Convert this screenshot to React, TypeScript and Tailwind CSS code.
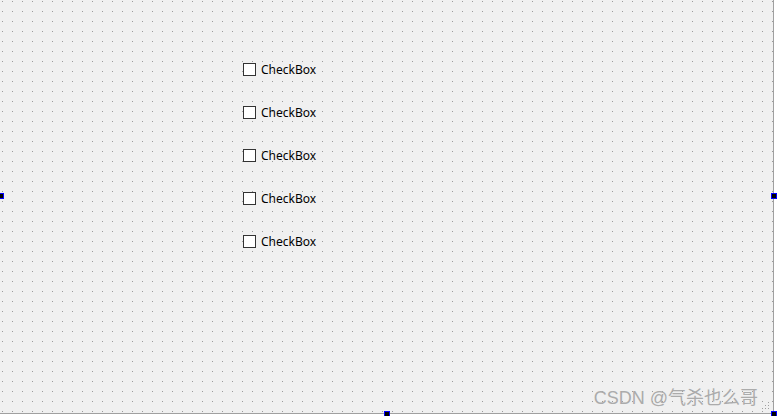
import * as React from "react";

const rows = [0, 1, 2, 3, 4];

function GridDots() {
  return (
    <svg className="absolute inset-0 h-full w-full" aria-hidden>
      <defs>
        <pattern id="dots" x="2" y="1" width="10" height="10" patternUnits="userSpaceOnUse">
          <rect x="0" y="0" width="1" height="1" fill="#9a9a9a" />
        </pattern>
      </defs>
      <rect width="100%" height="100%" fill="url(#dots)" />
    </svg>
  );
}

function Handle({ className }: { className: string }) {
  return <div className={"absolute h-[6px] w-[6px] border border-[#0000ff] bg-black " + className} />;
}

export default function App() {
  return (
    <div className="relative h-[416px] w-[777px] overflow-hidden bg-white font-['Noto_Sans',sans-serif]">
      {/* form canvas */}
      <div className="relative h-[414px] w-[774px] border-r border-b border-[#a0a0a0] bg-[#f0f0f0]">
        <GridDots />
        <div className="relative flex flex-col gap-[30px] pl-[243px] pt-[63px]">
          {rows.map((i) => (
            <label key={i} className="flex h-[13px] items-center gap-[5px]">
              <span className="h-[13px] w-[13px] border border-[#333333] bg-white" />
              <span className="text-[12px] leading-none text-black">CheckBox</span>
            </label>
          ))}
        </div>
        <div className="absolute right-[15px] bottom-[6px] text-[18px] font-normal leading-none text-[#ababab] font-['Liberation_Sans','Noto_Sans_CJK_SC',sans-serif]">
          CSDN @气杀也么哥
        </div>
        {/* size grip */}
        <svg className="absolute right-[3px] bottom-[3px]" width="8" height="8" aria-hidden>
          <rect x="6" y="0" width="1" height="1" fill="#a0a0a0" />
          <rect x="3" y="3" width="1" height="1" fill="#a0a0a0" />
          <rect x="6" y="3" width="1" height="1" fill="#a0a0a0" />
          <rect x="0" y="6" width="1" height="1" fill="#a0a0a0" />
          <rect x="3" y="6" width="1" height="1" fill="#a0a0a0" />
          <rect x="6" y="6" width="1" height="1" fill="#a0a0a0" />
        </svg>
      </div>
      <Handle className="left-[-2px] top-[193px]" />
      <Handle className="left-[771px] top-[193px]" />
      <Handle className="left-[384px] top-[411px]" />
      <Handle className="left-[771px] top-[411px]" />
    </div>
  );
}
